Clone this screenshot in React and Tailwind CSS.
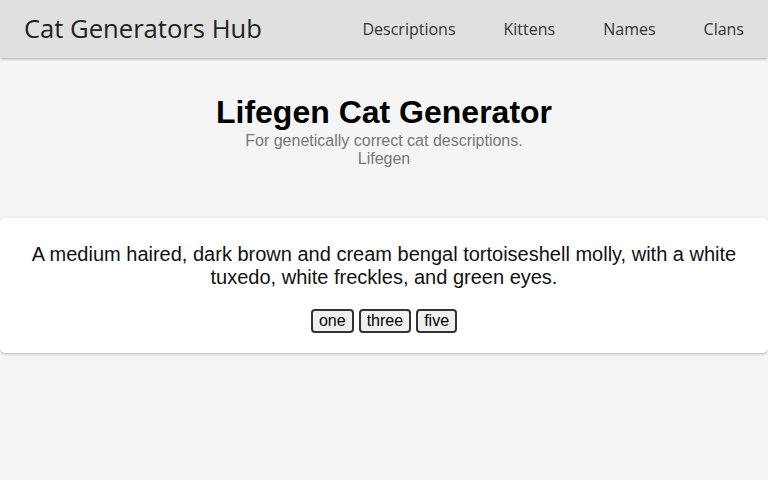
export default function App() {
  return (
    <div className="min-h-[480px] bg-[#f5f5f5]" style={{ fontFamily: '"Liberation Sans", Arial, sans-serif' }}>
      <header className="h-[58px] bg-[#e0e0e0] flex items-center justify-between px-6 shadow-[0_1px_3px_rgba(0,0,0,0.3)] relative" style={{ fontFamily: '"Open Sans", sans-serif' }}>
        <div className="text-[25.6px] text-[#222] leading-none">Cat Generators Hub</div>
        <nav className="flex gap-12 text-[16px] text-[#333]">
          <span>Descriptions</span>
          <span>Kittens</span>
          <span>Names</span>
          <span>Clans</span>
        </nav>
      </header>
      <div className="text-center pt-[35px]">
        <h1 className="text-[32px] font-bold leading-[39px] text-black">Lifegen Cat Generator</h1>
        <div className="text-[16px] leading-[18px] text-[#777]">For genetically correct cat descriptions.</div>
        <div className="text-[16px] leading-[18px] text-[#777]">Lifegen</div>
      </div>
      <div className="mt-[50px] bg-white rounded-[5px] shadow-[0_1px_3px_rgba(0,0,0,0.25)] pt-[25px] pb-[20px] px-6 text-center">
        <p className="text-[20px] leading-[23px] text-[#111]">
          A medium haired, dark brown and cream bengal tortoiseshell molly, with a white tuxedo, white freckles, and green eyes.
        </p>
        <div className="flex justify-center gap-[5px] mt-[20px]">
          <button className="border-2 border-[#333] rounded-[4px] bg-[#efefef] px-[6px] h-[24px] text-[16px] leading-[18px] text-black">one</button>
          <button className="border-2 border-[#333] rounded-[4px] bg-[#efefef] px-[6px] h-[24px] text-[16px] leading-[18px] text-black">three</button>
          <button className="border-2 border-[#333] rounded-[4px] bg-[#efefef] px-[6px] h-[24px] text-[16px] leading-[18px] text-black">five</button>
        </div>
      </div>
    </div>
  );
}
